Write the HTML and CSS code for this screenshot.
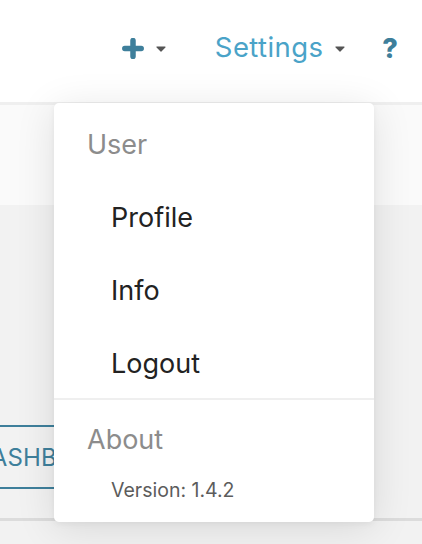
FILE: index.html
```html
<!DOCTYPE html>
<html>
<head>
<meta charset="utf-8">
<link rel="stylesheet" href="styles.css">
</head>
<body>
<header class="nav">
  <div class="nav-item add">
    <svg class="plus" width="22" height="21" viewBox="0 0 22 21"><path d="M11 2.5v16M2.8 10.5h16.4" stroke="#3e7f9b" stroke-width="5.5" stroke-linecap="round"/></svg>
    <svg class="caret" width="10" height="6" viewBox="0 0 10 6"><path d="M1 1h8L5 5z" fill="#555" stroke="#555" stroke-width="1.2" stroke-linejoin="round"/></svg>
  </div>
  <div class="nav-item settings">
    <span class="settings-label">Settings</span>
    <svg class="caret" width="10" height="6" viewBox="0 0 10 6"><path d="M1 1h8L5 5z" fill="#555" stroke="#555" stroke-width="1.2" stroke-linejoin="round"/></svg>
  </div>
  <div class="nav-item help">?</div>
</header>
<div class="nav-line"></div>
<div class="toolbar"></div>
<main class="content">
  <div class="btn-row">
    <button class="btn-outline">DASHBOARD</button>
  </div>
  <div class="rule"></div>
</main>
<div class="dropdown">
  <div class="dd-section">
    <div class="dd-header">User</div>
    <div class="dd-item">Profile</div>
    <div class="dd-item">Info</div>
    <div class="dd-item">Logout</div>
  </div>
  <div class="dd-divider"></div>
  <div class="dd-section about">
    <div class="dd-header">About</div>
    <div class="dd-version">Version: 1.4.2</div>
  </div>
</div>
</body>
</html>
```
FILE: styles.css
```css
* { box-sizing: border-box; }
html, body { margin: 0; padding: 0; }
body {
  width: 422px;
  height: 544px;
  overflow: hidden;
  background: #f2f2f2;
  font-family: Inter, "Noto Sans", sans-serif;
  position: relative;
}
.nav {
  height: 102px;
  background: #fff;
  display: flex;
  justify-content: flex-end;
  align-items: center;
  padding-right: 24px;
  padding-bottom: 6px;
}
.nav-item {
  display: flex;
  align-items: center;
}
.add { gap: 12px; margin-right: 49px; }
.plus { display: block; }
.caret { display: block; margin-top: 2px; }
.settings { gap: 12px; margin-right: 37px; }
.settings-label {
  color: #4aa3c8;
  font-size: 27.5px;
  letter-spacing: 0.4px;
  line-height: 1;
}
.help {
  color: #3e7f9b;
  font-weight: 800;
  font-size: 27px;
  line-height: 1;
}
.nav-line {
  height: 3px;
  background: #efefef;
}
.toolbar {
  height: 100px;
  background: #fafafa;
}
.content {
  padding-top: 220px;
}
.btn-row { display: flex; }
.btn-outline {
  margin-left: -48px;
  height: 64px;
  padding: 0 20px;
  background: transparent;
  border: 2px solid #3e7f9b;
  border-radius: 2px;
  color: #3e7f9b;
  font-family: Inter, sans-serif;
  font-size: 24px;
  letter-spacing: 0.2px;
}
.rule {
  margin-top: 29px;
  height: 3px;
  background: #dcdcdc;
}
.dropdown {
  position: absolute;
  left: 54px;
  top: 103px;
  width: 320px;
  height: 419px;
  background: #fff;
  border-radius: 5px;
  box-shadow: 0 6px 40px rgba(0,0,0,0.11), 0 2px 6px rgba(0,0,0,0.05);
  padding-top: 5px;
}
.dd-header {
  color: #8c8c8c;
  font-size: 27px;
  height: 73px;
  line-height: 73px;
  padding-left: 33px;
}
.dd-item {
  color: #222;
  font-size: 27px;
  height: 73px;
  line-height: 73px;
  padding-left: 57px;
}
.dd-divider {
  height: 2px;
  background: #efefef;
  margin-top: -2px;
}
.about .dd-header {
  height: 55px;
  line-height: 34px;
  margin-top: 23px;
}
.dd-version {
  color: #5c5c5c;
  font-size: 19.5px;
  padding-left: 57px;
  line-height: 24px;
}
```
